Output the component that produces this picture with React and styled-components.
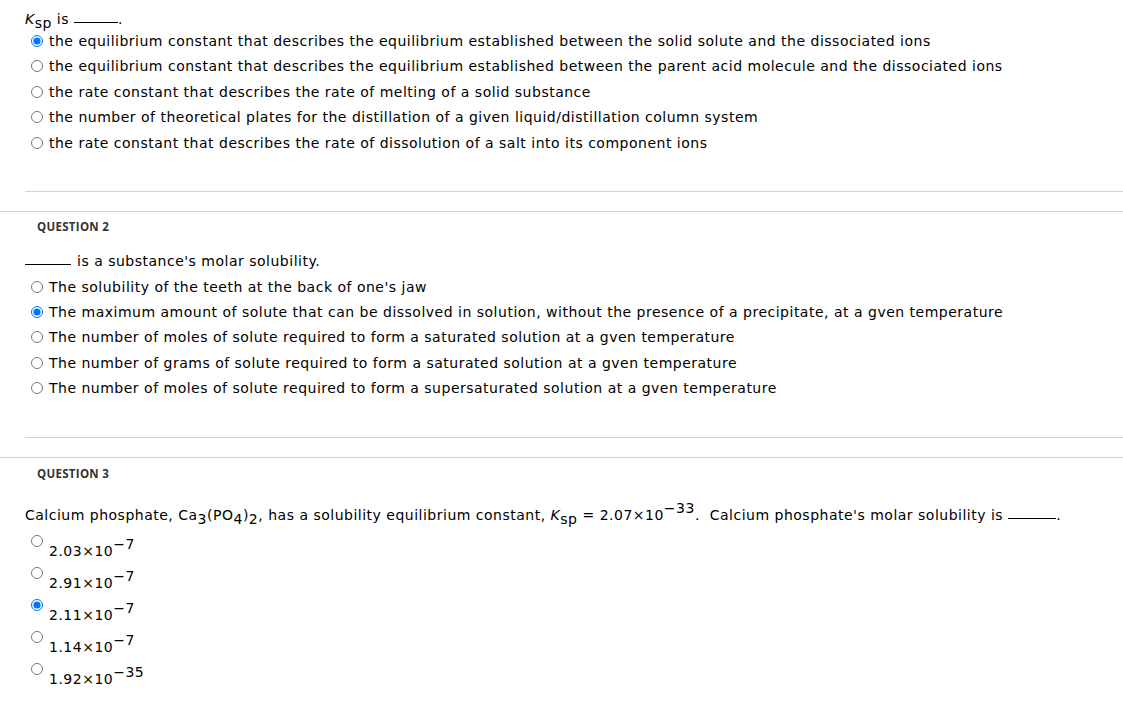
import React from "react";
import styled, { createGlobalStyle } from "styled-components";

const Global = createGlobalStyle`
  html, body { margin: 0; padding: 0; background: #fff; }
  body { font-family: "DejaVu Sans", Verdana, sans-serif; color: #000; }
`;

const Page = styled.div`
  width: 1123px;
  padding-top: 10px;
`;

const Block = styled.div`
  padding-left: 25px;
`;

const Heading = styled.div`
  padding-left: 12px;
  font-family: "Open Sans", "DejaVu Sans", sans-serif;
  font-size: 11.5px;
  font-weight: 700;
  color: #333;
  letter-spacing: 0.3px;
  height: 30px;
  display: flex;
  align-items: center;
`;

const Prompt = styled.div`
  font-size: 14px;
  letter-spacing: 0.5px;
  line-height: 18px;
  height: ${(p) => p.$h || 18}px;
  margin-top: ${(p) => p.$mt || 0}px;
  margin-bottom: ${(p) => p.$mb || 0}px;
  white-space: nowrap;
`;

const List = styled.div`
  display: flex;
  flex-direction: column;
  padding-left: 6px;
`;

const Row = styled.label`
  display: flex;
  align-items: ${(p) => (p.$top ? "flex-start" : "center")};
  height: ${(p) => p.$h}px;
  font-size: 14px;
  letter-spacing: 0.5px;
`;

const Radio = styled.input.attrs({ type: "radio" })`
  margin: 0 6px 0 0;
  width: 12px;
  height: 12px;
  flex: none;
`;

const OptText = styled.span`
  padding-top: ${(p) => p.$pt || 0}px;
  white-space: nowrap;
`;

const Sub = styled.sub`
  font-size: 1em;
  vertical-align: -0.3em;
  line-height: 0;
`;

const Sup = styled.sup`
  font-size: 1em;
  vertical-align: 0.5em;
  line-height: 0;
`;

const Blank = styled.span`
  display: inline-block;
  width: ${(p) => p.$w}px;
  border-bottom: 1px solid #000;
  margin: 0 ${(p) => p.$mr || 0}px 0 ${(p) => p.$ml || 0}px;
  vertical-align: 1px;
`;

const Divider = styled.div`
  margin-left: ${(p) => p.$ml || 0}px;
  border-top: 1px solid #d2d2d2;
  margin-top: ${(p) => p.$mt || 0}px;
`;

const Ksp = () => (
  <>
    <i>K</i>
    <Sub>sp</Sub>
  </>
);

const Sci = ({ m, e }) => (
  <>
    {m}×10<Sup>−{e}</Sup>
  </>
);

const q1 = [
  "the equilibrium constant that describes the equilibrium established between the solid solute and the dissociated ions",
  "the equilibrium constant that describes the equilibrium established between the parent acid molecule and the dissociated ions",
  "the rate constant that describes the rate of melting of a solid substance",
  "the number of theoretical plates for the distillation of a given liquid/distillation column system",
  "the rate constant that describes the rate of dissolution of a salt into its component ions",
];

const q2 = [
  "The solubility of the teeth at the back of one's jaw",
  "The maximum amount of solute that can be dissolved in solution, without the presence of a precipitate, at a gven temperature",
  "The number of moles of solute required to form a saturated solution at a gven temperature",
  "The number of grams of solute required to form a saturated solution at a gven temperature",
  "The number of moles of solute required to form a supersaturated solution at a gven temperature",
];

const q3 = [
  ["2.03", "7"],
  ["2.91", "7"],
  ["2.11", "7"],
  ["1.14", "7"],
  ["1.92", "35"],
];

export default function App() {
  return (
    <Page>
      <Global />
      <Block>
        <Prompt>
          <Ksp /> is <Blank $w={44} />.
        </Prompt>
        <List>
          {q1.map((t, i) => (
            <Row key={i} $h={25.5}>
              <Radio name="q1" defaultChecked={i === 0} />
              <OptText>{t}</OptText>
            </Row>
          ))}
        </List>
      </Block>
      <Divider $ml={25} $mt={35} />
      <Divider $mt={19} />
      <Block>
        <Heading>QUESTION 2</Heading>
        <Prompt $mt={10} $mb={5}>
          <Blank $w={46} $mr={6} />is a substance's molar solubility.
        </Prompt>
        <List>
          {q2.map((t, i) => (
            <Row key={i} $h={25.2}>
              <Radio name="q2" defaultChecked={i === 1} />
              <OptText>{t}</OptText>
            </Row>
          ))}
        </List>
      </Block>
      <Divider $ml={25} $mt={37} />
      <Divider $mt={19} />
      <Block>
        <Heading>QUESTION 3</Heading>
        <Prompt $mt={18} $h={29}>
          Calcium phosphate, Ca<Sub>3</Sub>(PO<Sub>4</Sub>)<Sub>2</Sub>, has a solubility equilibrium
          constant, <Ksp /> = <Sci m="2.07" e="33" />.&nbsp; Calcium phosphate's molar solubility is{" "}
          <Blank $w={48} />.
        </Prompt>
        <List>
          {q3.map(([m, e], i) => (
            <Row key={i} $h={32} $top>
              <Radio name="q3" defaultChecked={i === 2} />
              <OptText $pt={8}>
                <Sci m={m} e={e} />
              </OptText>
            </Row>
          ))}
        </List>
      </Block>
    </Page>
  );
}
